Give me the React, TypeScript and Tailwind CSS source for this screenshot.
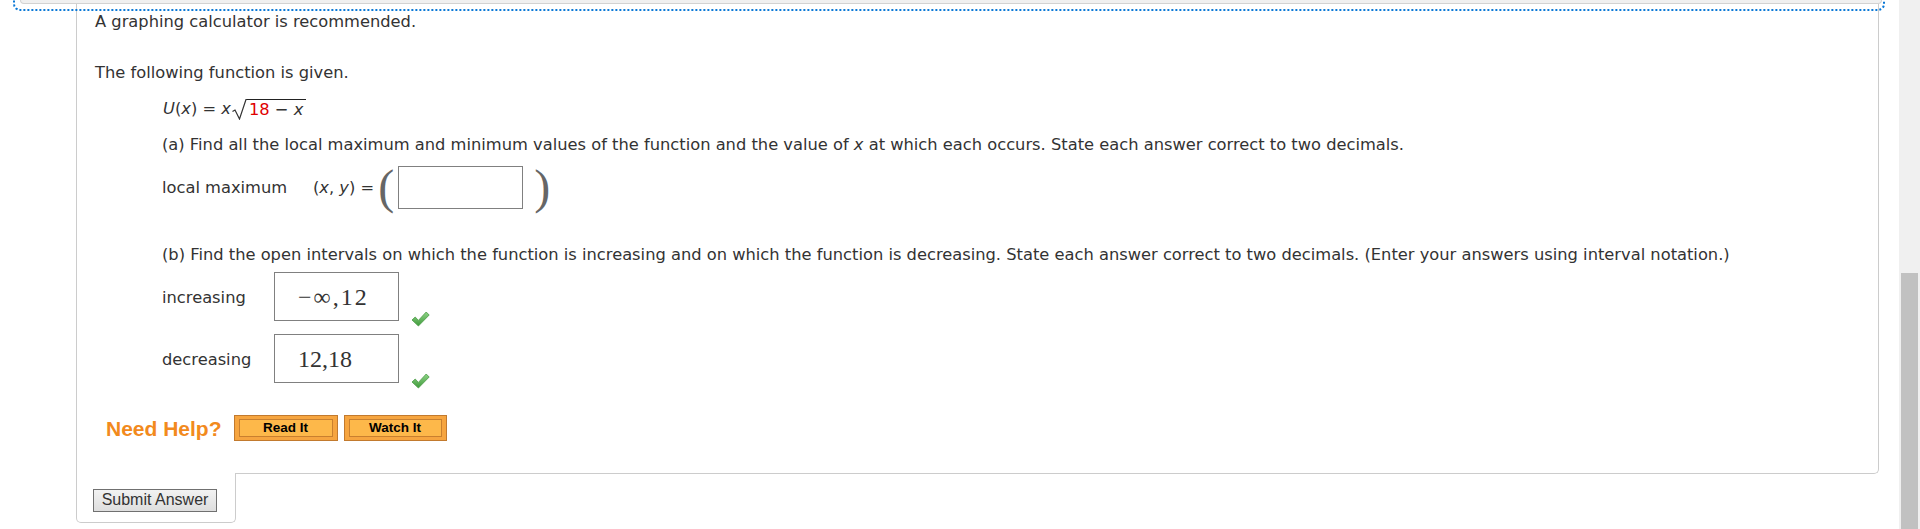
import React from "react";

function Check() {
  return (
    <svg width="19" height="16" viewBox="0 0 19 16" className="self-end -mb-[6px] ml-[12px] shrink-0">
      <defs>
        <linearGradient id="chk" x1="0" y1="0" x2="0" y2="1">
          <stop offset="0" stopColor="#8fd487" />
          <stop offset="1" stopColor="#3f9a3b" />
        </linearGradient>
      </defs>
      <path
        d="M1 9 L4.2 6 L7.4 9.4 L15.2 1 L18.2 4 L7.4 15 Z"
        fill="url(#chk)"
        stroke="#4a9a45"
        strokeWidth="0.8"
        strokeLinejoin="round"
      />
    </svg>
  );
}

function HelpButton({ label }: { label: string }) {
  return (
    <button className="h-[26px] w-full border border-[#c27a2e] bg-[#f6a540] px-[4px] py-[3px]">
      <span className="flex h-full items-center justify-center border border-[#c9802f] bg-[#fdb84a] font-['Liberation_Sans',Arial,sans-serif] text-[13.5px] leading-none font-bold text-black">
        {label}
      </span>
    </button>
  );
}

export default function App() {
  return (
    <div className="flex h-[529px] w-[1920px] overflow-hidden bg-white">
      <div className="relative flex-1">
        {/* previous block edge + focus outline */}
        <div className="ml-[20px] h-[4px] w-[1862px] rounded-b-[4px] border-x border-b border-[#d2d2d2] bg-[#f0f0f0]" />
        <div className="pointer-events-none absolute left-[13px] top-[-30px] h-[41px] w-[1872px] rounded-[7px] border-2 border-dotted border-[#0a78d6]" />

        {/* question panel */}
        <div className="ml-[76px] w-[1803px] rounded-br-[5px] border-x border-b border-[#cccccc] pt-[8px] pb-[32px] pl-[18px] font-['DejaVu_Sans',Verdana,sans-serif] text-[16.3px] text-[#333]">
          <p className="leading-[20px]">A graphing calculator is recommended.</p>
          <p className="mt-[31px] leading-[20px]">The following function is given.</p>

          <div className="mt-[15px] ml-[68px] flex h-[22px] items-center leading-[20px]">
            <span className="whitespace-pre">
              <i>U</i>(<i>x</i>) = <i>x</i>
            </span>
            <span className="ml-[1px] flex items-start">
              <svg width="15" height="21" viewBox="0 0 15 21" className="shrink-0">
                <path d="M0.5 12.5 L3 11 L7.5 20 L14 0.5 L15 0.5" fill="none" stroke="#333" strokeWidth="1.2" />
              </svg>
              <span className="border-t border-[#222] pr-[3px] pl-[2px] leading-[20px] whitespace-pre">
                <span className="text-[#e00000]">18</span> − <i>x</i>
              </span>
            </span>
          </div>

          <p className="mt-[15px] ml-[67px] leading-[20px]">
            (a) Find all the local maximum and minimum values of the function and the value of <i>x</i> at which
            each occurs. State each answer correct to two decimals.
          </p>

          <div className="mt-[8px] ml-[67px] flex h-[48px] items-center">
            <span className="w-[151px] pt-[2px]">local maximum</span>
            <span className="pt-[2px]">
              (<i>x</i>, <i>y</i>) =
            </span>
            <span className="ml-[4px] font-['Liberation_Serif',serif] text-[48px] leading-[48px] font-light text-[#666]">(</span>
            <div className="ml-[4px] h-[43px] w-[125px] border border-[#808080] bg-white" />
            <span className="ml-[11px] font-['Liberation_Serif',serif] text-[48px] leading-[48px] font-light text-[#666]">)</span>
          </div>

          <p className="mt-[34px] ml-[67px] leading-[20px]">
            (b) Find the open intervals on which the function is increasing and on which the function is decreasing.
            State each answer correct to two decimals. (Enter your answers using interval notation.)
          </p>

          <div className="mt-[7px] ml-[67px] flex items-center">
            <span className="w-[112px] pt-[3px]">increasing</span>
            <div className="flex h-[49px] w-[125px] items-center border border-[#808080] pl-[23px] font-['Liberation_Serif',serif] text-[24px] text-[#333]">
              <span className="tracking-[2px]">−∞,12</span>
            </div>
            <Check />
          </div>

          <div className="mt-[13px] ml-[67px] flex items-center">
            <span className="w-[112px] pt-[3px]">decreasing</span>
            <div className="flex h-[49px] w-[125px] items-center border border-[#808080] pl-[23px] font-['Liberation_Serif',serif] text-[24px] text-[#333]">
              12,18
            </div>
            <Check />
          </div>

          <div className="mt-[32px] ml-[11px] flex h-[26px] items-center">
            <span className="font-['Liberation_Sans',Arial,sans-serif] text-[21px] leading-none font-bold text-[#f28a1d]">
              Need Help?
            </span>
            <div className="ml-[12px] w-[104px]">
              <HelpButton label="Read It" />
            </div>
            <div className="ml-[6px] w-[103px]">
              <HelpButton label="Watch It" />
            </div>
          </div>
        </div>

        {/* submit tab */}
        <div className="relative -mt-px ml-[76px] h-[50px] w-[160px] rounded-b-[5px] border-x border-b border-[#cccccc] bg-white pt-[14px] pl-[16px]">
          <button className="h-[23px] w-[124px] border border-[#707070] bg-gradient-to-b from-[#f2f2f2] to-[#dedede] font-['Liberation_Sans',Arial,sans-serif] text-[16px] leading-none text-[#333]">
            Submit Answer
          </button>
        </div>
      </div>

      {/* scrollbar */}
      <div className="w-[21px] shrink-0 bg-[#f0f0f0] pt-[273px]">
        <div className="mx-[2px] h-[256px] bg-[#c1c1c1]" />
      </div>
    </div>
  );
}
